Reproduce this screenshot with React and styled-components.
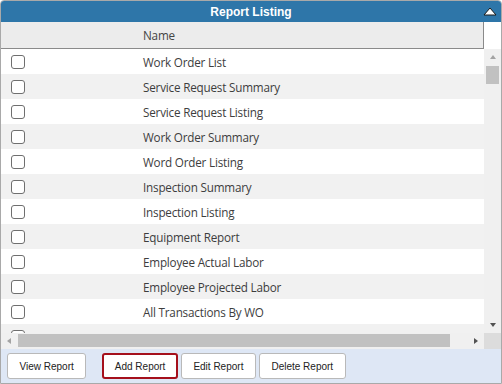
import React from 'react';
import styled, { createGlobalStyle } from 'styled-components';

const GlobalStyle = createGlobalStyle`
  body { margin: 0; background: #fff; }
  * { box-sizing: border-box; }
`;

// last row is only partly visible above the scrollbar
const reports = [
  'Work Order List',
  'Service Request Summary',
  'Service Request Listing',
  'Work Order Summary',
  'Word Order Listing',
  'Inspection Summary',
  'Inspection Listing',
  'Equipment Report',
  'Employee Actual Labor',
  'Employee Projected Labor',
  'All Transactions By WO',
  '',
];

const Panel = styled.div`
  width: 502px;
  height: 384px;
  border: 1px solid #a9a9a9;
  border-radius: 4px 4px 0 0;
  display: flex;
  flex-direction: column;
  overflow: hidden;
  font-family: 'Open Sans', 'Noto Sans', sans-serif;
`;

const TitleBar = styled.div`
  height: 21px;
  flex: none;
  background: #2e76a9;
  display: grid;
  grid-template-columns: 1fr auto 1fr;
  align-items: center;
`;

const Title = styled.div`
  grid-column: 2;
  color: #fff;
  font: bold 12px 'Liberation Sans', Arial, sans-serif;
`;

const Collapse = styled.div`
  justify-self: end;
  display: flex;
  padding-right: 4px;
`;

const Grid = styled.div`
  flex: 1;
  display: grid;
  grid-template-columns: 1fr 17px;
  grid-template-rows: 27px 1fr 16px;
  min-height: 0;
`;

const HeaderRow = styled.div`
  display: flex;
  align-items: center;
  background: #ececec;
  border-bottom: 1px solid #8a8a8a;
  border-right: 1px solid #8a8a8a;
  color: #444;
  font-size: 11.7px;
  letter-spacing: -0.2px;
`;

const HeaderSpacer = styled.div`
  background: #fff;
`;

const Rows = styled.div`
  overflow: hidden;
  min-height: 0;
`;

const Row = styled.div`
  height: 25px;
  display: flex;
  align-items: center;
  background: ${({ $alt }) => ($alt ? '#f1f1f1' : '#fff')};
  color: #3d3d3d;
  font-size: 11.7px;
  letter-spacing: -0.2px;
`;

const CheckCell = styled.div`
  width: 142px;
  flex: none;
  padding-left: 10px;
  display: flex;
  align-items: center;
`;

const NameCell = styled.div`
  white-space: nowrap;
`;

const Check = styled.span`
  width: 14px;
  height: 14px;
  border: 1px solid #6f6f6f;
  border-radius: 3px;
  background: #fff;
`;

const VScroll = styled.div`
  background: #f0f0f0;
  display: flex;
  flex-direction: column;
`;

const HScroll = styled.div`
  background: #f0f0f0;
  display: flex;
  align-items: center;
`;

const Corner = styled.div`
  background: #dcdcdc;
`;

const ArrowBox = styled.div`
  flex: none;
  width: ${({ $w }) => $w || 16}px;
  height: 16px;
  display: flex;
  align-items: center;
  justify-content: center;
`;

const Arrow = styled.span`
  width: 0;
  height: 0;
  border-style: solid;
  border-color: transparent;
  ${({ $dir, $dark }) => {
    const c = $dark ? '#525252' : '#a3a3a3';
    if ($dir === 'up') return `border-width: 0 3.5px 4px; border-bottom-color: ${c};`;
    if ($dir === 'down') return `border-width: 4px 3.5px 0; border-top-color: ${c};`;
    if ($dir === 'left') return `border-width: 3.5px 4px 3.5px 0; border-right-color: ${c};`;
    return `border-width: 3.5px 0 3.5px 4px; border-left-color: ${c};`;
  }}
`;

const VTrack = styled.div`
  flex: 1;
  padding: 1px 2px 0;
`;

const VThumb = styled.div`
  height: 18px;
  background: #c1c1c1;
`;

const HTrack = styled.div`
  flex: 1;
  display: flex;
  height: 100%;
  padding: 1px 0 2px 1px;
`;

const HThumb = styled.div`
  width: 432px;
  background: #c1c1c1;
`;

const Footer = styled.div`
  height: 34px;
  flex: none;
  background: #dee7f5;
  display: flex;
  align-items: center;
  gap: 3px;
  padding-left: 6px;
`;

const Button = styled.button`
  height: 26px;
  padding: 0 ${({ $active }) => ($active ? 10.5 : 11.5)}px;
  margin-right: ${({ $spaced }) => ($spaced ? 13 : 0)}px;
  background: #fff;
  border: ${({ $active }) => ($active ? '2px solid #a5101c' : '1px solid #b9b9b9')};
  border-radius: 3px;
  font: 10px 'Liberation Sans', Arial, sans-serif;
  color: #222;
  white-space: nowrap;
`;

export default function App() {
  return (
    <>
      <GlobalStyle />
      <Panel>
        <TitleBar>
          <Title>Report Listing</Title>
          <Collapse>
            <svg width="14" height="9" viewBox="0 0 14 9">
              <polygon points="7,1 13,8 1,8" fill="#fff" stroke="#1a1a1a" strokeWidth="1" />
            </svg>
          </Collapse>
        </TitleBar>
        <Grid>
          <HeaderRow>
            <CheckCell />
            <NameCell>Name</NameCell>
          </HeaderRow>
          <HeaderSpacer />
          <Rows>
            {reports.map((r, i) => (
              <Row key={i} $alt={i % 2 === 1}>
                <CheckCell><Check /></CheckCell>
                <NameCell>{r}</NameCell>
              </Row>
            ))}
          </Rows>
          <VScroll>
            <ArrowBox $w={17}><Arrow $dir="up" /></ArrowBox>
            <VTrack><VThumb /></VTrack>
            <ArrowBox $w={17}><Arrow $dir="down" $dark /></ArrowBox>
          </VScroll>
          <HScroll>
            <ArrowBox><Arrow $dir="left" /></ArrowBox>
            <HTrack><HThumb /></HTrack>
            <ArrowBox $w={17}><Arrow $dir="right" $dark /></ArrowBox>
          </HScroll>
          <Corner />
        </Grid>
        <Footer>
          <Button $spaced>View Report</Button>
          <Button $active>Add Report</Button>
          <Button>Edit Report</Button>
          <Button>Delete Report</Button>
        </Footer>
      </Panel>
    </>
  );
}
